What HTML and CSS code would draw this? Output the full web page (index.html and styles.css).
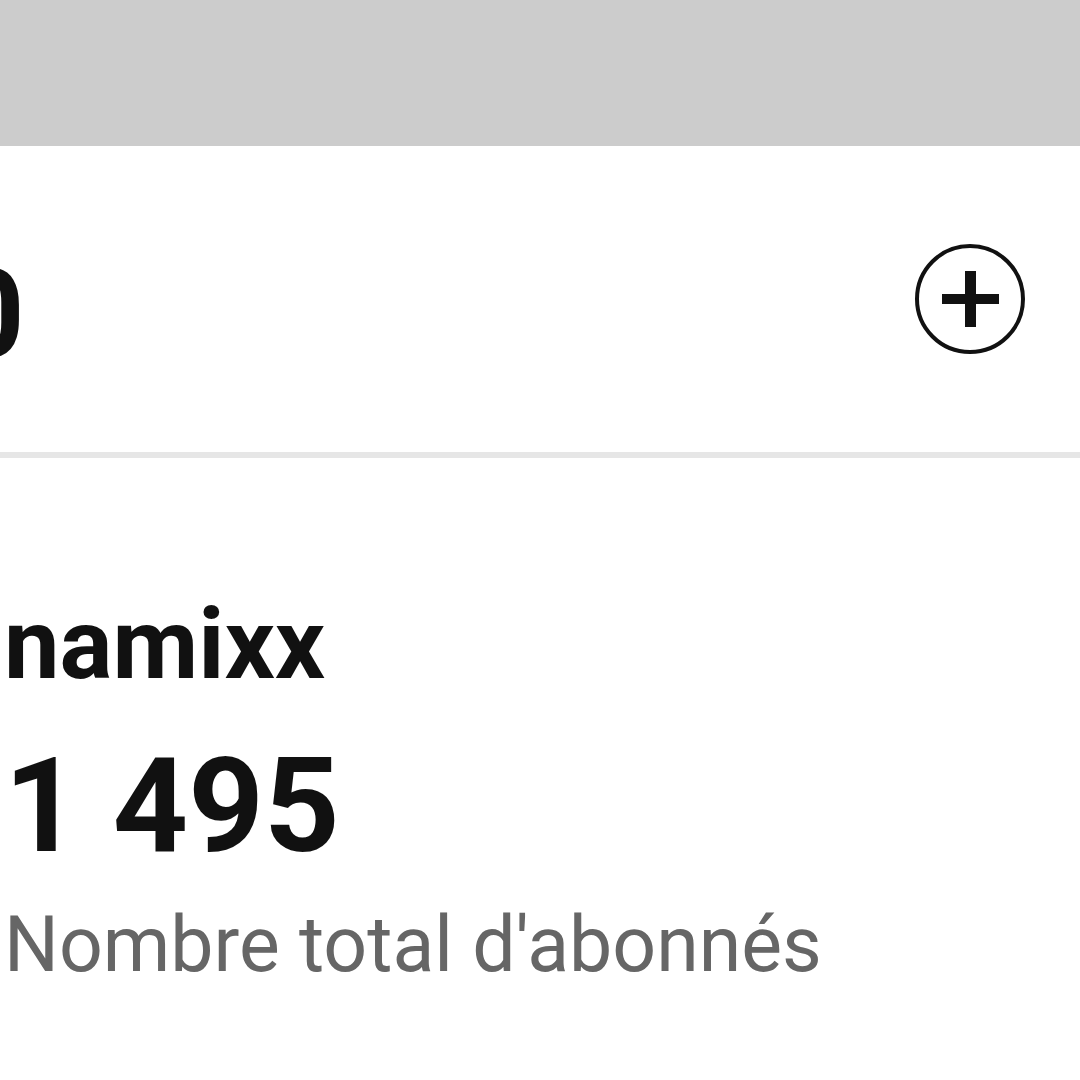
FILE: index.html
```html
<!DOCTYPE html>
<html lang="fr">
<head>
    <meta charset="UTF-8">
    <meta name="viewport" content="width=device-width, initial-scale=1.0">
    <title>Abonnés</title>
    <link rel="stylesheet" href="styles.css">
</head>
<body>
    <div class="top-bar"></div>

    <div class="count-row">
        <span class="count-value">0</span>
        <button class="add-btn" aria-label="Ajouter">
            <svg width="110" height="110" viewBox="0 0 110 110">
                <circle cx="55" cy="55" r="53" fill="none" stroke="#111" stroke-width="4"/>
                <rect x="27" y="50" width="57" height="10" fill="#111"/>
                <rect x="50" y="27" width="11" height="56" fill="#111"/>
            </svg>
        </button>
    </div>

    <div class="divider"></div>

    <div class="account">
        <div class="account-name">namixx</div>
        <div class="account-total">1 495</div>
        <div class="account-label">Nombre total d'abonnés</div>
    </div>
</body>
</html>
```

FILE: styles.css
```css
body {
    margin: 0;
    font-family: Roboto, 'Noto Sans', sans-serif;
    background-color: #fff;
    color: #111;
    overflow: hidden;
}

.top-bar {
    height: 146px;
    background-color: #cccccc;
}

.count-row {
    height: 306px;
    display: flex;
    justify-content: space-between;
    align-items: center;
    padding-right: 55px;
    overflow: hidden;
}

.count-value {
    margin-left: -47px;
    padding-top: 30px;
    font-size: 125px;
    line-height: 125px;
    font-weight: bold;
}

.add-btn {
    padding: 0;
    border: none;
    background: none;
    display: flex;
    cursor: pointer;
}

.divider {
    height: 6px;
    background-color: #e6e6e6;
}

.account {
    padding-top: 128px;
    padding-left: 4px;
}

.account-name {
    font-size: 99px;
    line-height: 116px;
    font-weight: bold;
}

.account-total {
    margin-top: 29px;
    font-size: 132px;
    line-height: 150px;
    font-weight: bold;
}

.account-label {
    margin-top: 19px;
    font-size: 77px;
    line-height: 90px;
    color: #666;
}
```
